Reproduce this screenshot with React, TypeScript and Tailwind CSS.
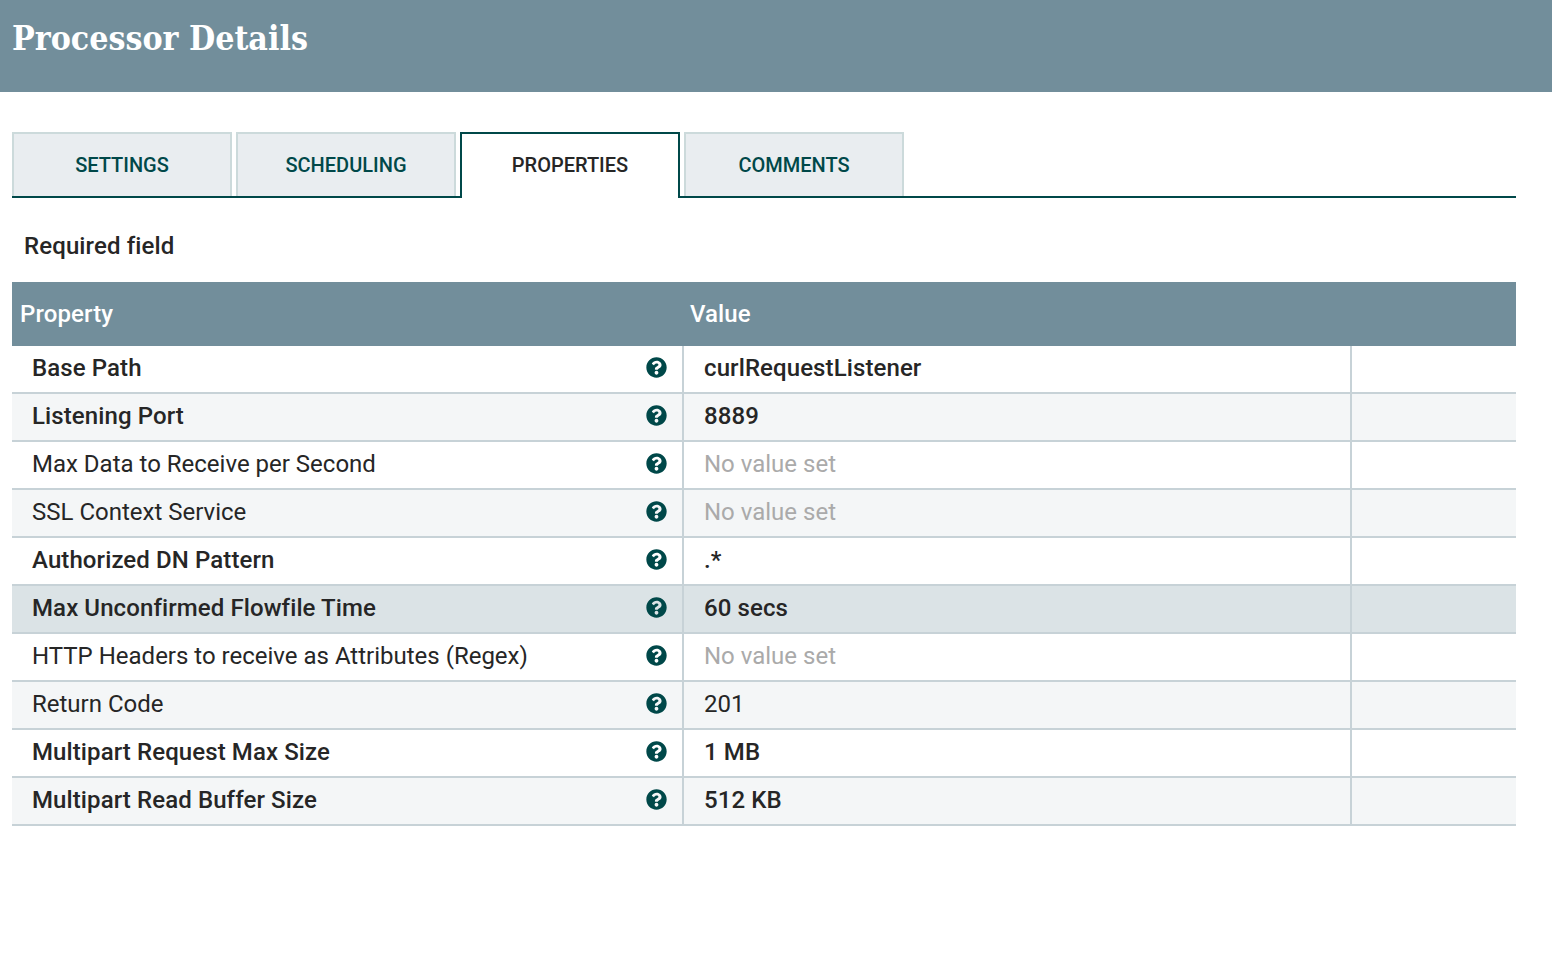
import React from 'react'
import { FaQuestionCircle } from 'react-icons/fa'

const tabs = ['SETTINGS', 'SCHEDULING', 'PROPERTIES', 'COMMENTS']

interface Row {
  name: string
  value: string
  required?: boolean
  unset?: boolean
  selected?: boolean
}

const rows: Row[] = [
  { name: 'Base Path', value: 'curlRequestListener', required: true },
  { name: 'Listening Port', value: '8889', required: true },
  { name: 'Max Data to Receive per Second', value: 'No value set', unset: true },
  { name: 'SSL Context Service', value: 'No value set', unset: true },
  { name: 'Authorized DN Pattern', value: '.*', required: true },
  { name: 'Max Unconfirmed Flowfile Time', value: '60 secs', required: true, selected: true },
  { name: 'HTTP Headers to receive as Attributes (Regex)', value: 'No value set', unset: true },
  { name: 'Return Code', value: '201' },
  { name: 'Multipart Request Max Size', value: '1 MB', required: true },
  { name: 'Multipart Read Buffer Size', value: '512 KB', required: true },
]

export default function App() {
  return (
    <div className="min-h-[958px] bg-white font-['Roboto',sans-serif] text-[#262626]">
      {/* Header */}
      <div className="h-[92px] bg-[#728e9b] px-3 pt-[15px]">
        <h1 className="font-['DejaVu_Serif_Condensed','DejaVu_Serif',serif] text-[33.6px] leading-[46px] font-bold text-white">
          Processor Details
        </h1>
      </div>

      <div className="pr-9 pl-3">
        {/* Tabs */}
        <div className="mt-10 flex h-[66px] gap-1 border-b-2 border-[#004849]">
          {tabs.map((tab) =>
            tab === 'PROPERTIES' ? (
              <div
                key={tab}
                className="-mb-[2px] flex h-[66px] w-[220px] items-center justify-center border-x-2 border-t-2 border-[#004849] bg-white pb-[2px] text-[20px] font-medium"
              >
                {tab}
              </div>
            ) : (
              <div
                key={tab}
                className="flex h-[64px] w-[220px] items-center justify-center border-x-2 border-t-2 border-[#ccdadb] bg-[#e9edf0] text-[20px] font-medium text-[#004849]"
              >
                {tab}
              </div>
            ),
          )}
        </div>

        <div className="flex h-[84px] items-center pt-3 pl-3 text-[24px] font-medium tracking-[0.12px]">Required field</div>

        {/* Table */}
        <div className="grid h-16 grid-cols-[670px_1fr] items-center bg-[#728e9b] pl-2 text-[24px] font-medium tracking-[0.1px] text-white">
          <span>Property</span>
          <span>Value</span>
        </div>
        {rows.map((row, i) => (
          <div
            key={row.name}
            className={`grid h-12 grid-cols-[672px_668px_1fr] border-b-2 border-[#c7d2d7] text-[24px] ${
              row.selected ? 'bg-[#dbe3e6]' : i % 2 === 1 ? 'bg-[#f4f6f7]' : 'bg-white'
            }`}
          >
            <div className="flex items-center justify-between border-r-2 border-[#c7d2d7] pr-4 pb-[2px] pl-5">
              <span className={row.required ? 'font-medium tracking-[0.1px]' : ''}>{row.name}</span>
              <FaQuestionCircle className="mr-[-0.5px] mb-[1px] text-[21px] text-[#004849]" />
            </div>
            <div
              className={`flex items-center border-r-2 border-[#c7d2d7] pb-[2px] pl-5 ${
                row.unset ? 'text-[#aaaaaa]' : row.required ? 'font-medium tracking-[0.1px]' : ''
              }`}
            >
              {row.value}
            </div>
            <div />
          </div>
        ))}
      </div>
    </div>
  )
}
